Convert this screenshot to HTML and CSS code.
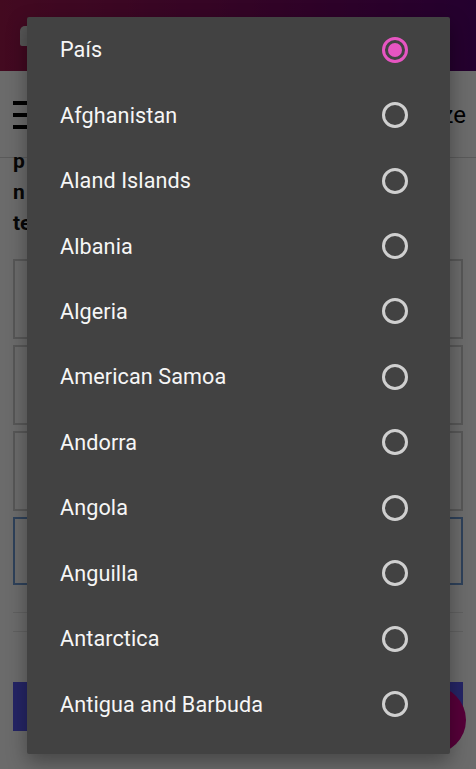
FILE: index.html
```html
<!DOCTYPE html>
<html lang="es">
<head>
<meta charset="utf-8">
<link rel="stylesheet" href="styles.css">
</head>
<body>
<div class="page">
  <header class="appbar"><span class="logo"></span></header>
  <nav class="navbar">
    <span class="burger"><i></i><i></i><i></i></span>
    <span class="navtext">ze</span>
  </nav>
  <div class="content">
    <p class="intro">p<br>n<br>te</p>
    <div class="field"></div>
    <div class="field"></div>
    <div class="field"></div>
    <div class="field focused"></div>
    <div class="rule"></div>
    <div class="rule"></div>
    <div class="button"></div>
  </div>
  <span class="fab"></span>
</div>
<div class="scrim"></div>
<div class="dialog" role="radiogroup">
  <div class="item"><span class="label">País</span><span class="radio checked"></span></div>
  <div class="item"><span class="label">Afghanistan</span><span class="radio"></span></div>
  <div class="item"><span class="label">Aland Islands</span><span class="radio"></span></div>
  <div class="item"><span class="label">Albania</span><span class="radio"></span></div>
  <div class="item"><span class="label">Algeria</span><span class="radio"></span></div>
  <div class="item"><span class="label">American Samoa</span><span class="radio"></span></div>
  <div class="item"><span class="label">Andorra</span><span class="radio"></span></div>
  <div class="item"><span class="label">Angola</span><span class="radio"></span></div>
  <div class="item"><span class="label">Anguilla</span><span class="radio"></span></div>
  <div class="item"><span class="label">Antarctica</span><span class="radio"></span></div>
  <div class="item"><span class="label">Antigua and Barbuda</span><span class="radio"></span></div>
</div>
</body>
</html>
```
FILE: styles.css
```css
* { box-sizing: border-box; }
html, body { margin: 0; padding: 0; }
body {
  width: 476px;
  height: 769px;
  overflow: hidden;
  font-family: Roboto, "Noto Sans", sans-serif;
  background: #fff;
  position: relative;
}
.page { position: relative; height: 769px; }
.appbar {
  height: 71px;
  background: linear-gradient(90deg, #a0184e 0%, #74085e 60%, #560070 100%);
  position: relative;
}
.logo {
  position: absolute;
  left: 20px; top: 26px;
  width: 14px; height: 20px;
  background: #cfcfcf;
  border-radius: 5px 5px 2px 2px;
}
.navbar {
  height: 87px;
  display: flex;
  align-items: center;
  justify-content: space-between;
  padding: 0 10px 0 13px;
  border-bottom: 1px solid #d6d6d6;
}
.burger { display: flex; flex-direction: column; gap: 8px; width: 14px; margin-top: 2px; }
.burger i { display: block; height: 4px; background: #000; }
.navtext { font-size: 24px; color: #000; margin-top: 2px; }
.content { padding: 0 13px; }
.intro {
  margin: -12px 0 0;
  font-weight: bold;
  font-size: 21px;
  line-height: 31px;
  color: #111;
  height: 113px;
}
.field {
  height: 80px;
  border: 2px solid #d0d0d0;
  margin-bottom: 6px;
}
.field.focused { height: 68px; border-color: #6f9bd6; }
.rule { height: 1px; background: #e4e4e4; margin-top: 27px; }
.rule + .rule { margin-top: 18px; }
.button { height: 49px; background: #5a5af0; margin-top: 50px; }
.fab {
  position: absolute;
  left: 398px; top: 686px;
  width: 68px; height: 68px;
  border-radius: 50%;
  background: #cc0088;
}
.scrim {
  position: absolute;
  inset: 0;
  background: rgba(0, 0, 0, 0.58);
}
.dialog {
  position: absolute;
  left: 27px; top: 17px;
  width: 423px; height: 737px;
  background: #424242;
  border-radius: 2px;
  box-shadow: 0 8px 20px rgba(0, 0, 0, 0.35);
  display: flex;
  flex-direction: column;
}
.item {
  height: 65.45px;
  flex: none;
  display: flex;
  align-items: center;
  justify-content: space-between;
  padding: 0 42px 0 33px;
}
.label {
  color: #f6f6f6;
  font-size: 21.6px;
  letter-spacing: 0.1px;
}
.radio {
  width: 26px; height: 26px;
  border-radius: 50%;
  border: 3px solid #cfcfcf;
  position: relative;
}
.radio.checked { border-color: #e755c2; }
.radio.checked::after {
  content: "";
  position: absolute;
  left: 3px; top: 3px;
  width: 14px; height: 14px;
  border-radius: 50%;
  background: #e755c2;
}
```
